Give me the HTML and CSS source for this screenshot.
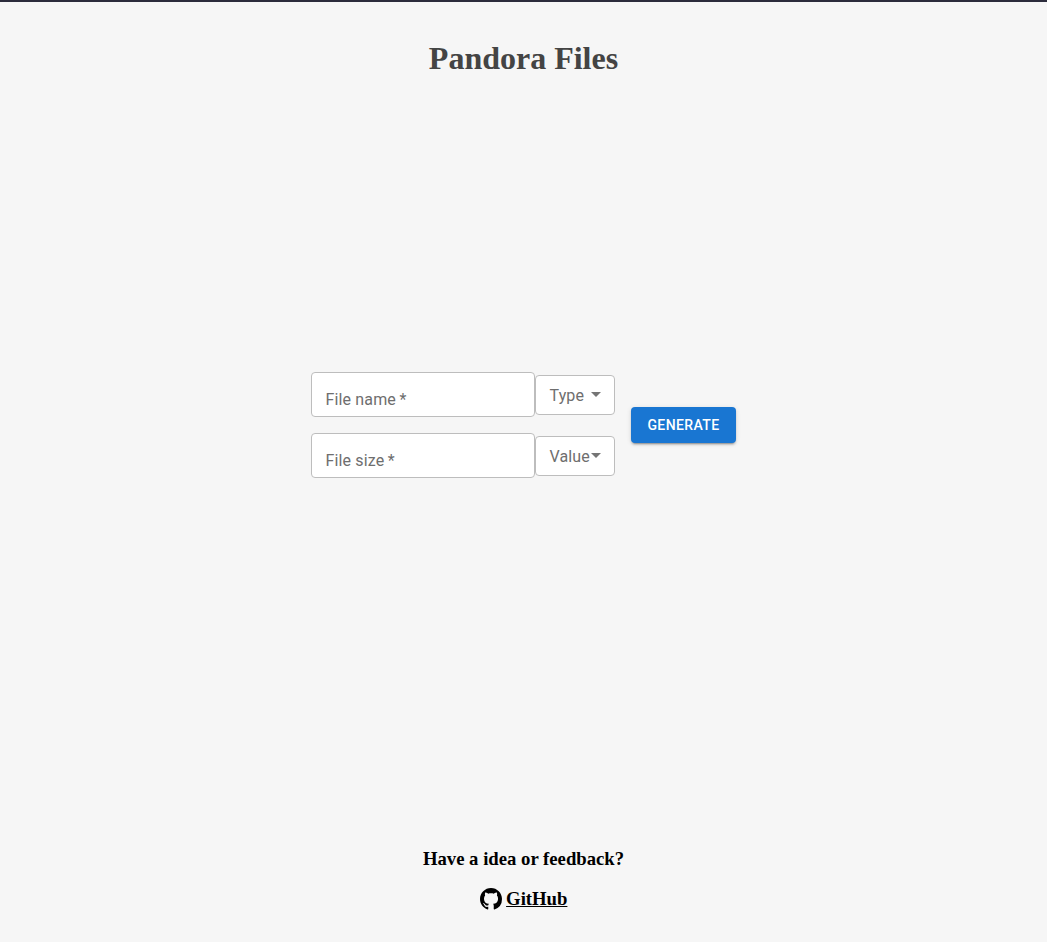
FILE: index.html
```html
<!DOCTYPE html>
<html lang="en">
<head>
    <meta charset="UTF-8">
    <meta name="viewport" content="width=device-width, initial-scale=1.0">
    <title>Pandora Files</title>
    <link rel="stylesheet" href="styles.css">
</head>
<body>
    <h1 class="title">Pandora Files</h1>
    <main class="main">
        <form class="form">
            <div class="fields">
                <div class="row">
                    <label class="field"><span class="field-label">File name&#8201;*</span></label>
                    <div class="select"><span class="select-text">Type</span><span class="caret"></span></div>
                </div>
                <div class="row">
                    <label class="field"><span class="field-label">File size&#8201;*</span></label>
                    <div class="select"><span class="select-text">Value</span><span class="caret"></span></div>
                </div>
            </div>
            <button type="button" class="generate">Generate</button>
        </form>
    </main>
    <footer class="footer">
        <h3 class="feedback">Have a idea or feedback?</h3>
        <a class="github" href="#">
            <svg class="github-icon" viewBox="0 0 16 16" aria-hidden="true"><path d="M8 0C3.58 0 0 3.58 0 8c0 3.54 2.29 6.53 5.47 7.59.4.07.55-.17.55-.38 0-.19-.01-.82-.01-1.49-2.01.37-2.53-.49-2.69-.94-.09-.23-.48-.94-.82-1.13-.28-.15-.68-.52-.01-.53.63-.01 1.08.58 1.23.82.72 1.21 1.87.87 2.33.66.07-.52.28-.87.51-1.07-1.78-.2-3.64-.89-3.64-3.95 0-.87.31-1.59.82-2.15-.08-.2-.36-1.02.08-2.12 0 0 .67-.21 2.2.82.64-.18 1.32-.27 2-.27s1.36.09 2 .27c1.53-1.04 2.2-.82 2.2-.82.44 1.1.16 1.92.08 2.12.51.56.82 1.27.82 2.15 0 3.07-1.87 3.75-3.65 3.95.29.25.54.73.54 1.48 0 1.07-.01 1.93-.01 2.2 0 .21.15.46.55.38A8.01 8.01 0 0 0 16 8c0-4.42-3.58-8-8-8z"/></svg>
            <span class="github-text">GitHub</span>
        </a>
    </footer>
</body>
</html>
```

FILE: styles.css
```css
* { box-sizing: border-box; }
html, body { height: 100%; }
body { margin: 0; min-height: 942px; display: flex; flex-direction: column; background-color: #f6f6f6; border-top: 2px solid #2c2c3c; font-family: "Liberation Serif", serif; overflow: hidden; }
.title { margin: 0; padding-top: 38px; height: 88px; text-align: center; font-size: 32px; line-height: 37px; font-weight: bold; color: #444444; }
.main { flex: 1; display: flex; align-items: center; justify-content: center; padding-bottom: 88px; }
.form { display: flex; align-items: center; gap: 16px; }
.fields { display: flex; flex-direction: column; gap: 16px; }
.row { display: flex; align-items: center; }
.field { display: flex; align-items: flex-end; width: 224px; height: 45px; padding: 0 14px 7px 13.5px; background-color: #ffffff; border: 1px solid #bdbdbd; border-radius: 4px; font-family: Roboto, sans-serif; font-size: 16px; line-height: 19px; letter-spacing: 0.15px; color: #6e6e6e; }
.select { display: flex; align-items: center; justify-content: space-between; width: 80px; height: 40px; padding: 0 13px 0 13.5px; background-color: #ffffff; border: 1px solid #bdbdbd; border-radius: 4px; font-family: Roboto, sans-serif; font-size: 16px; letter-spacing: 0.15px; color: #6e6e6e; }
.select-text { padding-top: 2px; }
.caret { width: 0; height: 0; border-left: 5px solid transparent; border-right: 5px solid transparent; border-top: 5px solid #757575; }
.generate { width: 105px; height: 36px; padding: 0; background-color: #1976d2; color: #ffffff; border: none; border-radius: 4px; font-family: Roboto, sans-serif; font-size: 14px; font-weight: 500; letter-spacing: 0.4px; text-transform: uppercase; box-shadow: 0 3px 1px -2px rgba(0,0,0,0.2), 0 2px 2px 0 rgba(0,0,0,0.14), 0 1px 5px 0 rgba(0,0,0,0.12); cursor: pointer; }
.footer { height: 94px; display: flex; flex-direction: column; align-items: center; color: #000000; }
.feedback { margin: 0; font-size: 18.72px; line-height: 22px; font-weight: bold; }
.github { display: flex; align-items: center; gap: 4.5px; margin-top: 18px; color: #000000; font-size: 18.72px; font-weight: bold; }
.github-icon { width: 22px; height: 22px; fill: #000000; }
```
